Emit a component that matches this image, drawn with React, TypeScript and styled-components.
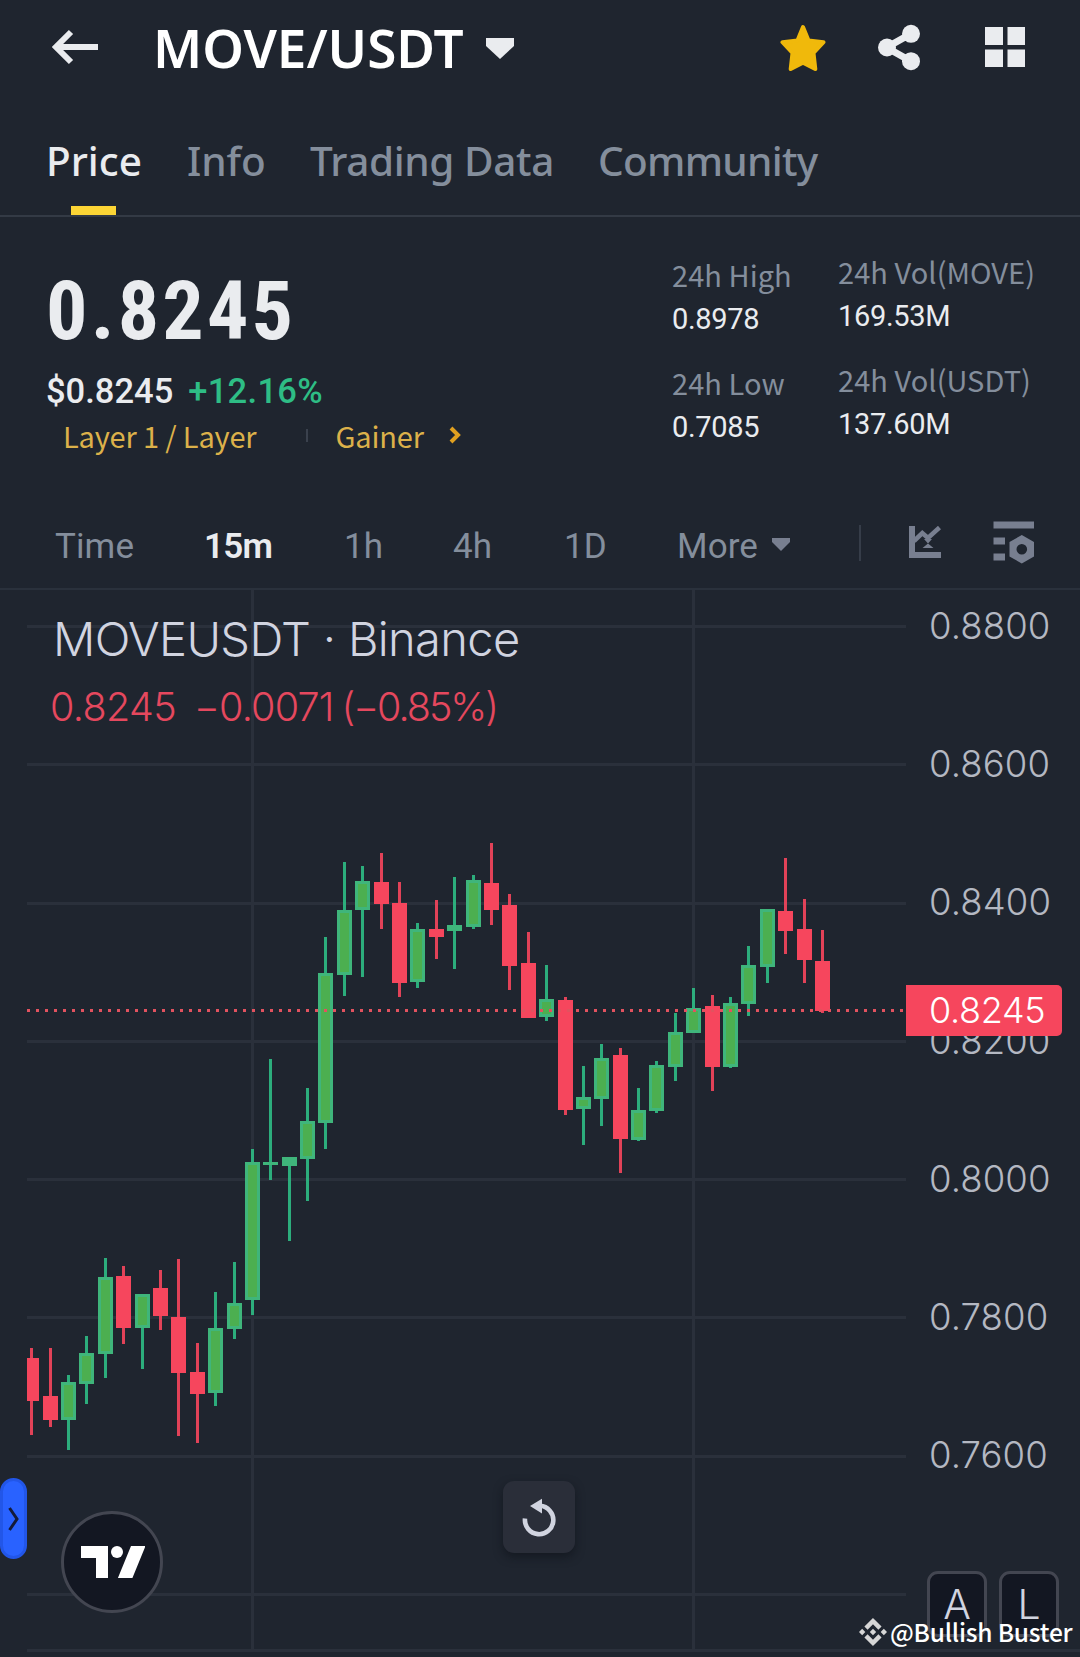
import React from "react";
import styled, { createGlobalStyle } from "styled-components";
import { SiBinance } from "react-icons/si";

const color = {
  bg: "#1f252f",
  text: "#eaecef",
  muted: "#848e9c",
  dim: "#787f90",
  line: "#333a45",
  yellow: "#f0b90b",
  tag: "#dcb14a",
  up: "#2ebd85",
  upFill: "#4caf50",
  down: "#f6465d",
};

const GlobalStyle = createGlobalStyle`
  *, *::before, *::after { box-sizing: border-box; }
  body { margin: 0; background: ${color.bg}; }
`;

const Screen = styled.main`
  width: 1080px;
  height: 1657px;
  overflow: hidden;
  display: flex;
  flex-direction: column;
  background: ${color.bg};
  color: ${color.text};
  font-family: Roboto, "Noto Sans", sans-serif;
  white-space: nowrap;
`;

/* ---------- header ---------- */

const Header = styled.header`
  display: flex;
  align-items: center;
  height: 94px;
  padding: 0 55px 0 52px;
`;

const Icon = styled.svg`
  display: block;
  flex: none;
`;

const Pair = styled.h1`
  margin: 2px auto 0 54px;
  display: flex;
  align-items: center;
  gap: 22px;
  font: 600 53px/60px "Noto Sans", sans-serif;
  color: #fff;
`;

const Actions = styled.div`
  display: flex;
  align-items: center;
  gap: 52px;
`;

/* ---------- tabs ---------- */

const Tabs = styled.nav`
  display: grid;
  grid-template-columns: 141px 123px 288px auto;
  height: 123px;
  padding: 37px 0 0 46px;
  border-bottom: 2px solid ${color.line};
`;

const Tab = styled.a<{ $active?: boolean; $spacing?: number }>`
  display: flex;
  flex-direction: column;
  justify-content: space-between;
  justify-self: start;
  align-items: center;
  font: 500 40.5px/60px "Noto Sans", sans-serif;
  letter-spacing: ${(p) => p.$spacing ?? 0}px;
  color: ${(p) => (p.$active ? color.text : color.muted)};

  &::after {
    content: "";
    width: 45px;
    height: 9px;
    background: ${(p) => (p.$active ? "#fcd535" : "transparent")};
  }
`;

/* ---------- overview ---------- */

const Overview = styled.section`
  display: flex;
  justify-content: space-between;
  height: 273px;
  padding: 33px 0 0 46px;
`;

const Quote = styled.div`
  display: flex;
  flex-direction: column;
`;

const LastPrice = styled.div`
  font: 700 82px/96px "Roboto Condensed", Roboto, sans-serif;
  letter-spacing: 3.2px;
  margin-top: 13px;
`;

const Change = styled.div`
  display: flex;
  gap: 15px;
  margin-top: 12px;
  font: 500 34.5px/40px Roboto, sans-serif;
`;

const Percent = styled.span`
  color: ${color.up};
  letter-spacing: 0.3px;
`;

const Labels = styled.div`
  display: flex;
  align-items: center;
  margin-top: 2px;
  padding-left: 17px;
  font: 400 29px/44px "Noto Sans CJK SC", "Noto Sans", sans-serif;
  letter-spacing: -0.15px;
  color: ${color.tag};
`;

const LabelDivider = styled.span`
  width: 2px;
  height: 13px;
  margin: 0 27px 0 50px;
  background: #3a414d;
`;

const GainerArrow = styled(Icon)`
  margin-left: 25px;
`;

const Stats = styled.div`
  display: grid;
  grid-template-columns: 166px 242px;
`;

const StatColumn = styled.dl<{ $offset?: number }>`
  margin: ${(p) => p.$offset ?? 0}px 0 0;
  display: flex;
  flex-direction: column;
  gap: 21px;
`;

const Stat = styled.div`
  display: flex;
  flex-direction: column;
  gap: 3px;
`;

const StatLabel = styled.dt`
  font: 400 29px/42px "Noto Sans CJK SC", "Noto Sans", sans-serif;
  letter-spacing: 0.05px;
  color: ${color.muted};
`;

const StatValue = styled.dd`
  margin: 0;
  font: 450 29px/42px Roboto, sans-serif;
  letter-spacing: -0.3px;
`;

/* ---------- interval bar ---------- */

const IntervalBar = styled.div`
  display: grid;
  grid-template-columns: 149px 140px 109px 111px 113px 182px 50px 84px auto;
  align-items: center;
  height: 100px;
  padding: 16px 0 0 55px;
  border-bottom: 2px solid #2a313c;
`;

const Interval = styled.button<{ $active?: boolean }>`
  display: flex;
  gap: 14px;
  align-items: center;
  padding: 0;
  border: 0;
  background: none;
  font: ${(p) => (p.$active ? 650 : 400)} 35px/44px Roboto, sans-serif;
  letter-spacing: ${(p) => (p.$active ? -0.7 : 0.1)}px;
  color: ${(p) => (p.$active ? color.text : color.muted)};
`;

const BarDivider = styled.span`
  width: 2px;
  height: 36px;
  margin-top: -9px;
  background: #363d49;
`;

/* ---------- chart ---------- */

const Chart = styled.section`
  position: relative;
  flex: 1;
  display: flex;
  justify-content: space-between;
  font-family: Inter, "Liberation Sans", sans-serif;
  font-weight: 300;
`;

const Plot = styled.svg`
  position: absolute;
  inset: 0;
`;

const Legend = styled.div`
  position: relative;
  padding: 20px 0 0 53px;
`;

const Symbol = styled.div`
  font-size: 47px;
  line-height: 58px;
  letter-spacing: -0.65px;
  color: #d1d4e0;
`;

const LegendValues = styled.div`
  display: flex;
  margin-top: 15px;
  margin-left: -3px;
  font-size: 39.5px;
  line-height: 48px;
  color: #e5485e;
`;

const LegendValue = styled.span<{ $gap?: number; $spacing?: number }>`
  margin-left: ${(p) => p.$gap ?? 0}px;
  letter-spacing: ${(p) => p.$spacing ?? 0}px;
`;

const PriceAxis = styled.div`
  position: relative;
  display: flex;
  flex-direction: column;
  gap: 100.2px;
  width: 151px;
  padding-top: 17px;
  font-size: 36.5px;
  line-height: 38px;
  letter-spacing: 0.1px;
  color: #b4b8c2;
`;

const PriceTag = styled.div`
  position: absolute;
  top: 395px;
  left: 906px;
  width: 156px;
  height: 51px;
  padding-left: 23px;
  border-radius: 0 5px 5px 0;
  background: ${color.down};
  color: #fff;
  font-size: 36px;
  line-height: 51px;
  letter-spacing: -0.3px;
`;

const Drawer = styled.div`
  position: absolute;
  left: 0;
  top: 888px;
  width: 27px;
  height: 81px;
  display: grid;
  place-items: center;
  border: 3px solid #2256e8;
  border-radius: 13.5px;
  background: #2962ff;
`;

const Brand = styled.div`
  position: absolute;
  left: 61px;
  top: 920.5px;
  width: 102px;
  height: 102px;
  display: grid;
  place-items: center;
  border: 3px solid #434651;
  border-radius: 50%;
  background: #131722;
`;

const ResetButton = styled.button`
  position: absolute;
  left: 503px;
  top: 891px;
  width: 72px;
  height: 72px;
  padding: 0;
  display: grid;
  place-items: center;
  border: 0;
  border-radius: 11px;
  background: #2a2e39;
  box-shadow: 0 4px 10px rgba(10, 13, 20, 0.5);
`;

const ScaleButtons = styled.div`
  position: absolute;
  left: 927px;
  top: 981px;
  display: flex;
  gap: 12px;
`;

const ScaleButton = styled.span`
  width: 60px;
  height: 66px;
  border: 3px solid #434651;
  border-radius: 11px;
  background: #131722;
  color: #d1d4e0;
  font-size: 41px;
  line-height: 61px;
  text-align: center;
`;

const Watermark = styled.div`
  position: absolute;
  left: 859px;
  top: 1025px;
  display: flex;
  align-items: center;
  gap: 3px;
  font: 500 24.5px/34px "Noto Sans CJK SC", "Noto Sans", sans-serif;
  letter-spacing: -0.2px;
  color: #fff;
`;

type Candle = [x: number, up: 0 | 1, high: number, top: number, bottom: number, low: number];

const candles: Candle[] = [
  [31, 0, 1348, 1358, 1401, 1435], [50, 0, 1348, 1396, 1420, 1427], [68, 1, 1375, 1382, 1420, 1450],
  [86, 1, 1336, 1353, 1384, 1404], [105, 1, 1258, 1277, 1354, 1378], [123, 0, 1266, 1276, 1328, 1344],
  [142, 1, 1294, 1294, 1328, 1369], [160, 0, 1270, 1288, 1316, 1330], [178, 0, 1259, 1317, 1373, 1436],
  [197, 0, 1343, 1372, 1394, 1443], [215, 1, 1292, 1328, 1393, 1406], [234, 1, 1262, 1303, 1329, 1339],
  [252, 1, 1149, 1162, 1300, 1315], [270, 1, 1059, 1162, 1165, 1180], [289, 1, 1157, 1157, 1166, 1241],
  [307, 1, 1088, 1121, 1159, 1201], [325, 1, 937, 973, 1123, 1149], [344, 1, 862, 910, 975, 996],
  [362, 1, 866, 881, 910, 977], [381, 0, 853, 882, 904, 929], [399, 0, 882, 903, 983, 997],
  [417, 1, 923, 929, 982, 988], [436, 0, 900, 929, 937, 959], [454, 1, 877, 925, 931, 969],
  [473, 1, 875, 880, 927, 929], [491, 0, 843, 883, 910, 925], [509, 0, 894, 905, 966, 990],
  [528, 0, 932, 963, 1018, 1018], [546, 1, 965, 999, 1017, 1021], [565, 0, 997, 1000, 1110, 1115],
  [583, 1, 1066, 1097, 1109, 1145], [601, 1, 1044, 1058, 1099, 1126], [620, 0, 1048, 1055, 1139, 1173],
  [638, 1, 1088, 1110, 1140, 1141], [656, 1, 1061, 1065, 1111, 1113], [675, 1, 1013, 1032, 1067, 1081],
  [693, 1, 988, 1008, 1033, 1033], [712, 0, 995, 1006, 1067, 1091], [730, 1, 997, 1003, 1067, 1068],
  [748, 1, 946, 965, 1004, 1016], [767, 1, 909, 909, 967, 983], [785, 0, 858, 911, 931, 954],
  [804, 0, 899, 929, 960, 983], [822, 0, 930, 961, 1011, 1013],
];

const gridRows = [626.5, 764.5, 903.5, 1041.5, 1179.5, 1317.5, 1456.5, 1594.5];
const prices = ["0.8800", "0.8600", "0.8400", "0.8200", "0.8000", "0.7800", "0.7600"];

const CandleMark = ({ candle: [x, up, high, top, bottom, low] }: { candle: Candle }) => {
  const edge = up ? color.up : color.down;
  const left = Math.max(27, x - 7);
  const width = x + 8 - left;
  return (
    <g>
      <rect x={x - 1} y={high} width={3} height={low - high} fill={edge} opacity={0.9} />
      <rect x={left} y={top} width={width} height={bottom - top} fill={up ? "#3fb57b" : edge} />
      {up && bottom - top > 9 ? (
        <rect x={left + 3} y={top + 3} width={width - 6} height={bottom - top - 6} fill={color.upFill} />
      ) : null}
    </g>
  );
};

const stats = [
  [["24h High", "0.8978"], ["24h Low", "0.7085"]],
  [["24h Vol(MOVE)", "169.53M"], ["24h Vol(USDT)", "137.60M"]],
];

export default function App() {
  return (
    <Screen>
      <GlobalStyle />
      <Header>
        <Icon width="47" height="36" viewBox="52 29 47 36">
          <path d="M71 32 56 47 71 62M56 47H98" fill="none" stroke={color.text} strokeWidth="6" />
        </Icon>
        <Pair>
          MOVE/USDT
          <Icon width="28" height="21" viewBox="0 0 28 21">
            <path d="M0 0H28V8L14 21 0 8Z" fill={color.text} />
          </Icon>
        </Pair>
        <Actions>
          <Icon width="46" height="48" viewBox="780 23 46 48">
            <path
              d="M803 27 808.5 40.5 823.5 42.2 813.5 53 815.3 69 803 62.8 790.7 69 792.5 53 782.5 42.2 797.5 40.5Z"
              fill={color.yellow} stroke={color.yellow} strokeWidth="4" strokeLinejoin="round"
            />
          </Icon>
          <Icon width="43" height="47" viewBox="878 23.5 43 47">
            <path d="M911 33.3 886.5 47 911 60.7" fill="none" stroke={color.text} strokeWidth="7" />
            <circle cx="911" cy="33.3" r="9" fill={color.text} />
            <circle cx="887" cy="47" r="9" fill={color.text} />
            <circle cx="911" cy="60.7" r="9" fill={color.text} />
          </Icon>
          <Icon width="52" height="40" viewBox="-12 0 52 40">
            <path d="M0 0H18V18H0ZM22.5 0H40V18H22.5ZM0 22.5H18V40H0ZM22.5 22.5H40V40H22.5Z" fill={color.text} />
          </Icon>
        </Actions>
      </Header>

      <Tabs>
        <Tab $active>Price</Tab>
        <Tab $spacing={-0.1}>Info</Tab>
        <Tab $spacing={-0.4}>Trading Data</Tab>
        <Tab $spacing={-0.7}>Community</Tab>
      </Tabs>

      <Overview>
        <Quote>
          <LastPrice>0.8245</LastPrice>
          <Change>
            <span>$0.8245</span>
            <Percent>+12.16%</Percent>
          </Change>
          <Labels>
            Layer 1 / Layer
            <LabelDivider />
            Gainer
            <GainerArrow width="12" height="18" viewBox="0 0 12 18">
              <path d="M2 2 9 9 2 16" fill="none" stroke="#e0a020" strokeWidth="4" />
            </GainerArrow>
          </Labels>
        </Quote>
        <Stats>
          {stats.map((column, i) => (
            <StatColumn key={i} $offset={i ? 0 : 3}>
              {column.map(([label, value]) => (
                <Stat key={label}>
                  <StatLabel>{label}</StatLabel>
                  <StatValue>{value}</StatValue>
                </Stat>
              ))}
            </StatColumn>
          ))}
        </Stats>
      </Overview>

      <IntervalBar>
        <Interval>Time</Interval>
        <Interval $active>15m</Interval>
        <Interval>1h</Interval>
        <Interval>4h</Interval>
        <Interval>1D</Interval>
        <Interval>
          More
          <Icon width="18" height="18" viewBox="0 3 18 18">
            <path d="M0 3H18V7L9 16 0 7Z" fill={color.dim} />
          </Icon>
        </Interval>
        <BarDivider />
        <Icon width="32" height="42" viewBox="909 527 32 42">
          <g fill={color.dim}>
            <path d="M909 527H915V553H941V559H909Z" />
            <path d="M914 542 922.3 534 928 539 939.5 528.5" fill="none" stroke={color.dim} strokeWidth="4.6" />
            <path d="M924 540H932L928 544.5 933.5 549H922.5L928 544.5Z" />
          </g>
        </Icon>
        <Icon width="42" height="53" viewBox="993 522 42 53">
          <g fill={color.dim}>
            <path d="M993.5 522.5H1034V529.5H993.5ZM993.5 538.5H1005V545.5H993.5ZM993.5 554.5H1005V561.5H993.5Z" />
            <path
              fillRule="evenodd"
              d="M1021.8 536 1034 543V557.5L1021.8 564.5 1009.5 557.5V543ZM1021.8 545A5.3 5.3 0 1 0 1021.8 555.6 5.3 5.3 0 1 0 1021.8 545Z"
            />
          </g>
        </Icon>
      </IntervalBar>

      <Chart>
        <Plot width="1080" height="1067" viewBox="0 590 1080 1067">
          <g stroke="#2a303b" strokeWidth="3">
            {gridRows.map((y) => (
              <line key={y} x1="27" x2="906" y1={y} y2={y} />
            ))}
            <line x1="27" x2="1080" y1="1650.5" y2="1650.5" />
            <line x1="252.5" x2="252.5" y1="588" y2="1650" />
            <line x1="693.5" x2="693.5" y1="588" y2="1650" />
          </g>
          {candles.map((c) => (
            <CandleMark key={c[0]} candle={c} />
          ))}
          <line x1="27" x2="906" y1="1010.5" y2="1010.5" stroke="#e2525f" strokeWidth="3" strokeDasharray="3 6" />
        </Plot>

        <Legend>
          <Symbol>MOVEUSDT · Binance</Symbol>
          <LegendValues>
            <LegendValue $spacing={-0.6}>0.8245</LegendValue>
            <LegendValue $gap={18} $spacing={-0.8}>−0.0071</LegendValue>
            <LegendValue $gap={8} $spacing={-2}>(−0.85%)</LegendValue>
          </LegendValues>
        </Legend>
        <PriceAxis>
          {prices.map((p) => (
            <span key={p}>{p}</span>
          ))}
        </PriceAxis>
        <PriceTag>0.8245</PriceTag>

        <Drawer>
          <Icon width="12" height="24" viewBox="0 0 12 24">
            <path d="M1.5 1 9 12 1.5 23" fill="none" stroke="#131b3a" strokeWidth="3" />
          </Icon>
        </Drawer>
        <Brand>
          <Icon width="65" height="33" viewBox="-1 -1 65 33">
            <path d="M0 0H27V33H15V12H0ZM50 0H64.5L51 33H36.5Z" fill="#fff" />
            <circle cx="36" cy="6" r="6" fill="#fff" />
          </Icon>
        </Brand>
        <ResetButton>
          <Icon width="34" height="40" viewBox="522 1497 34 40">
            <path d="M525 1518.5A14.2 14.2 0 1 0 540 1505.8" fill="none" stroke="#d1d4e0" strokeWidth="4.6" />
            <path d="M530 1506 542 1498.7V1513.5Z" fill="#d1d4e0" />
          </Icon>
        </ResetButton>
        <ScaleButtons>
          <ScaleButton>A</ScaleButton>
          <ScaleButton>L</ScaleButton>
        </ScaleButtons>
        <Watermark>
          <SiBinance size={28} color="#d6d6d6" />
          @Bullish Buster
        </Watermark>
      </Chart>
    </Screen>
  );
}
